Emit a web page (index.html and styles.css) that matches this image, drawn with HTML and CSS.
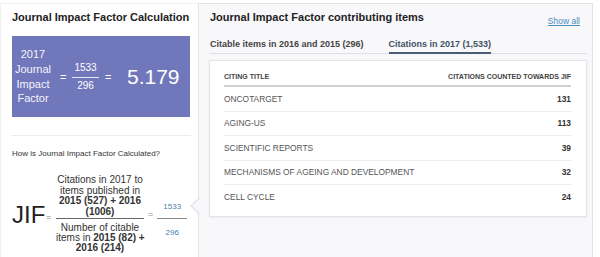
FILE: index.html
```html
<!DOCTYPE html>
<html>
<head>
<meta charset="utf-8">
<link rel="stylesheet" href="styles.css">
</head>
<body>
<div class="page">
  <section class="calc">
    <h2 class="calc-title">Journal Impact Factor Calculation</h2>
    <div class="jif-box">
      <div class="jif-label">2017<br>Journal<br>Impact<br>Factor</div>
      <div class="eq">=</div>
      <div class="frac">
        <div class="num">1533</div>
        <div class="den">296</div>
      </div>
      <div class="eq eq2">=</div>
      <div class="jif-value">5.179</div>
    </div>
    <hr class="sep">
    <p class="how">How is Journal Impact Factor Calculated?</p>
    <div class="formula">
      <div class="jif-big">JIF</div>
      <div class="eq-small">=</div>
      <div class="big-frac">
        <div class="big-num">Citations in 2017 to<br>items published in<br><b>2015 (527) + 2016<br>(1006)</b></div>
        <div class="big-den">Number of citable<br>items in <b>2015 (82) +<br>2016 (214)</b></div>
      </div>
      <div class="eq-mid">=</div>
      <div class="small-frac">
        <div class="sf-num">1533</div>
        <div class="sf-den">296</div>
      </div>
    </div>
  </section>
  <section class="items">
    <div class="items-head">
      <h2 class="items-title">Journal Impact Factor contributing items</h2>
      <a class="show-all" href="#">Show all</a>
    </div>
    <div class="tabs">
      <span class="tab">Citable items in 2016 and 2015 (296)</span>
      <span class="tab active">Citations in 2017 (1,533)</span>
    </div>
    <div class="card">
      <div class="row head"><span>CITING TITLE</span><span>CITATIONS COUNTED TOWARDS JIF</span></div>
      <div class="row"><span>ONCOTARGET</span><b>131</b></div>
      <div class="row"><span>AGING-US</span><b>113</b></div>
      <div class="row"><span>SCIENTIFIC REPORTS</span><b>39</b></div>
      <div class="row"><span>MECHANISMS OF AGEING AND DEVELOPMENT</span><b>32</b></div>
      <div class="row last"><span>CELL CYCLE</span><b>24</b></div>
    </div>
  </section>
</div>
</body>
</html>
```
FILE: styles.css
```css
* { box-sizing: border-box; }
html, body { margin: 0; padding: 0; background: #fff; }
body { font-family: "Liberation Sans", Arial, sans-serif; color: #222; }

.page {
  display: flex;
  padding-top: 3px;
  width: 600px;
  height: 257px;
  overflow: hidden;
}

/* left panel */
.calc {
  width: 198px;
  flex: none;
  padding: 0 8px 0 12px;
  border-left: 1px solid #f0f0f2;
  border-top: 1px solid #f0f0f2;
}
.calc-title {
  margin: 6px 0 0 -1px;
  font-size: 11px;
  line-height: 14px;
  font-weight: bold;
  color: #222;
}
.jif-box {
  margin-top: 12px;
  width: 178px;
  margin-left: -1px;
  height: 81px;
  background: #7177bb;
  color: #fff;
  display: flex;
  align-items: center;
}
.jif-label {
  width: 42px;
  text-align: center;
  font-size: 11px;
  line-height: 14.6px;
  color: #f4f4fb;
}
.eq {
  margin-left: 6px;
  font-size: 11px;
  width: 6px;
}
.eq2 { margin-left: 6px; }
.frac {
  margin-left: 6px;
  width: 27px;
  text-align: center;
  font-size: 10px;
  line-height: 10px;
}
.frac .num { padding-bottom: 4px; border-bottom: 1px solid #e6e7f4; }
.frac .den { padding-top: 3px; }
.jif-value {
  margin-left: 16px;
  font-size: 21px;
  line-height: 24px;
  color: #fff;
}
.sep {
  margin: 18px 0 0 -2px;
  width: 180px;
  border: 0;
  border-top: 1px solid #ececee;
  height: 0;
}
.how {
  margin: 13px 0 0 -1px;
  font-size: 8px;
  line-height: 10px;
  color: #333;
}
.formula {
  display: flex;
  align-items: flex-start;
  margin-top: 11px;
  margin-left: -1px;
}
.jif-big {
  margin-top: 33px;
  font-size: 24px;
  line-height: 24px;
  color: #222;
}
.eq-small {
  margin-top: 44px;
  margin-left: 1px;
  font-size: 8px;
  line-height: 8px;
  color: #777;
}
.big-frac {
  margin-left: 5px;
  margin-top: 5px;
  width: 88px;
  text-align: center;
  font-size: 10px;
  color: #333;
  white-space: nowrap;
}
.big-num {
  line-height: 10.6px;
  padding-bottom: 1px;
  border-bottom: 1px solid #666;
  margin-bottom: 4px;
}
.big-den { line-height: 10px; }
.eq-mid {
  margin-top: 39px;
  margin-left: 4px;
  font-size: 9px;
  line-height: 10px;
  color: #888;
}
.small-frac {
  margin-left: 4px;
  margin-top: 32px;
  width: 30px;
  text-align: center;
  font-size: 8px;
  color: #4a7fae;
}
.sf-num { line-height: 10px; padding-bottom: 6px; border-bottom: 1px solid #888; }
.sf-den { line-height: 10px; padding-top: 9px; }

/* right panel */
.items {
  position: relative;
  width: 395px;
  flex: none;
  margin-left: 0;
  height: 260px;
  background: #f8f8fa;
  border: 1px solid #e3e3e7;
  padding: 6px 5px 0 11px;
}
.items::before {
  content: "";
  position: absolute;
  left: -6px;
  top: 196px;
  width: 11px;
  height: 11px;
  background: #f8f8fa;
  border-left: 1px solid #dcdce0;
  border-bottom: 1px solid #dcdce0;
  transform: rotate(45deg);
}
.items-head {
  display: flex;
  justify-content: space-between;
  align-items: flex-start;
  padding-right: 7px;
}
.items-title {
  margin: 0;
  font-size: 11px;
  line-height: 14px;
  font-weight: bold;
  color: #222;
}
.show-all {
  margin-top: 6px;
  font-size: 8.5px;
  line-height: 10px;
  color: #4a8cc0;
  text-decoration: underline;
}
.tabs {
  display: flex;
  gap: 25px;
  margin-top: 12px;
  width: 377px;
  border-bottom: 1px solid #e0e0e4;
}
.tab {
  font-size: 9px;
  font-weight: bold;
  line-height: 12px;
  color: #444;
  padding-bottom: 2px;
  border-bottom: 2px solid transparent;
  margin-bottom: -1px;
}
.tab.active {
  color: #3e5267;
  border-bottom-color: #4a5d72;
}
.card {
  margin-top: 6px;
  width: 378px;
  margin-left: -1px;
  background: #fff;
  border: 1px solid #e4e4e8;
  box-shadow: 0 1px 2px rgba(0,0,0,0.05);
  padding: 0 15px 7.5px 14px;
}
.row {
  display: flex;
  justify-content: space-between;
  align-items: center;
  height: 24.5px;
  border-bottom: 1px solid #ececef;
  font-size: 8.4px;
  color: #555;
}
.row b { color: #333; font-weight: bold; }
.row.last { border-bottom: 0; height: 23.5px; }
.row.head {
  height: 26px;
  align-items: flex-start;
  padding-top: 11px;
  border-bottom: 2px solid #cfcfd3;
  font-size: 7px;
  line-height: 10px;
  font-weight: bold;
  color: #444;
}
```
